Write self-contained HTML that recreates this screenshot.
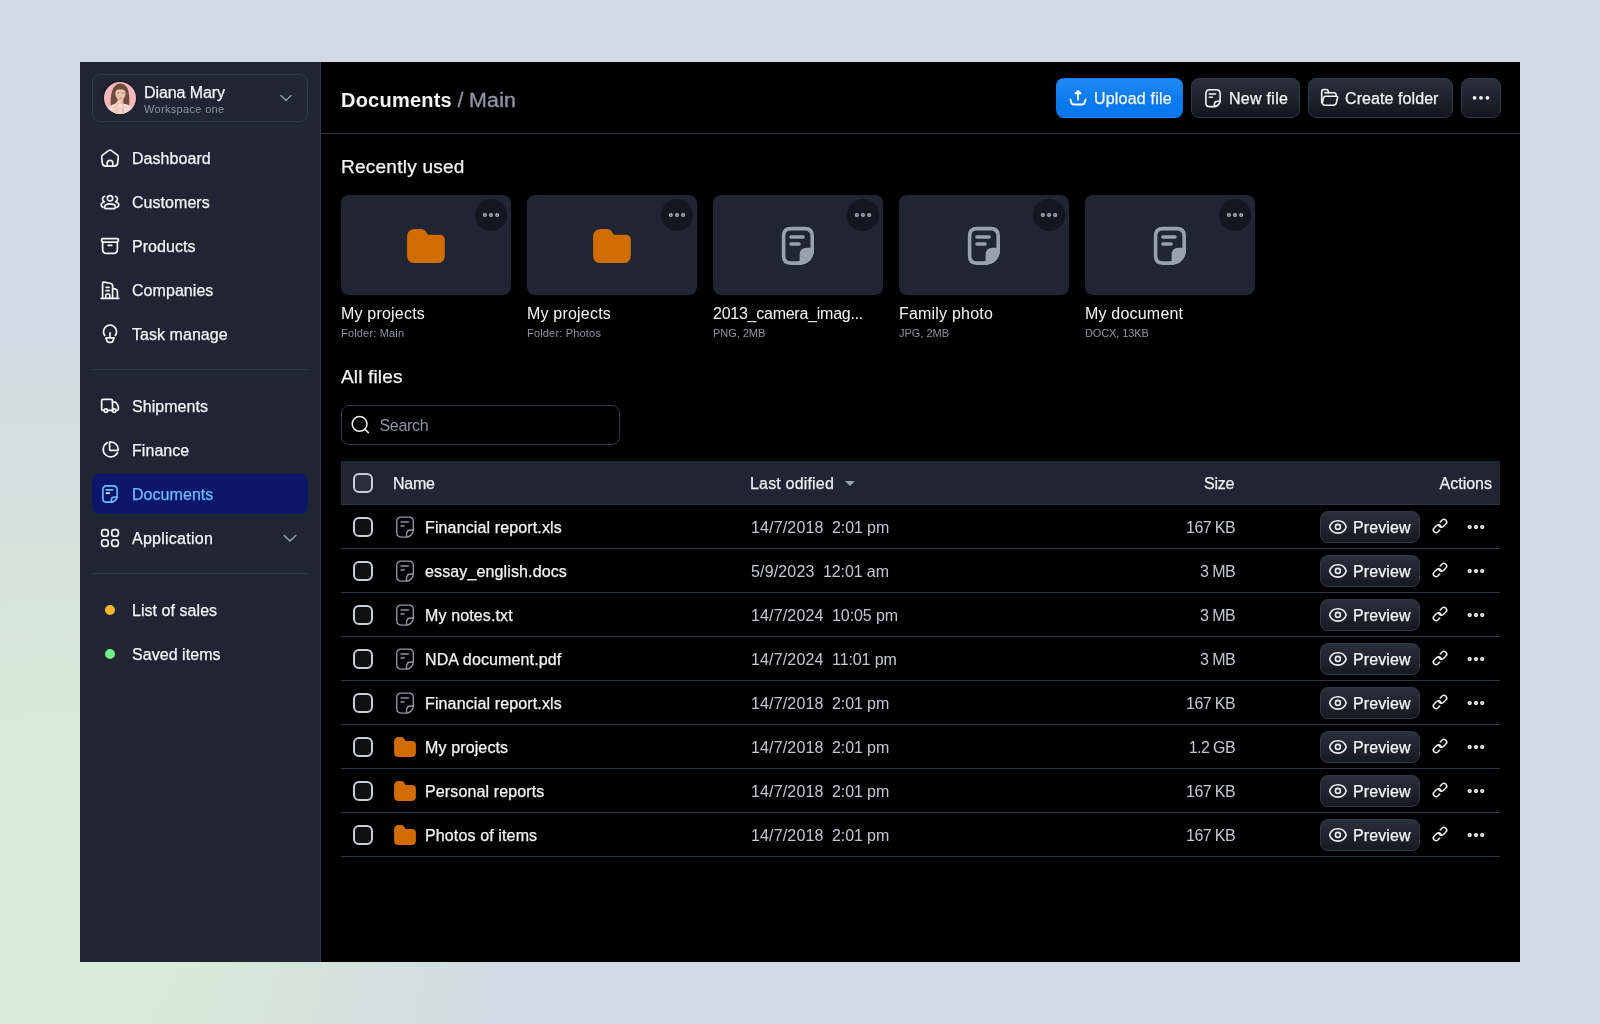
<!DOCTYPE html>
<html><head><meta charset="utf-8">
<style>
*{box-sizing:border-box;margin:0;padding:0}
html,body{width:1600px;height:1024px;overflow:hidden}
body{font-family:"Liberation Sans",sans-serif;color:#f4f5f7;position:relative;background:#d1d9e3;}
#bg{position:absolute;left:0;top:0;width:1600px;height:1024px;background:radial-gradient(ellipse 470px 580px at 50px 890px,#d7ebd7 0%,#d7ebd7 28%,rgba(215,235,215,.55) 60%,rgba(209,217,227,0) 100%);}
.app{position:absolute;left:80px;top:62px;width:1440px;height:900px;background:#000;overflow:hidden;will-change:transform}
.side{position:absolute;left:0;top:0;width:241px;height:900px;background:#1f2532;border-right:1px solid #2d394b}
.user{position:absolute;left:12px;top:12px;width:216px;height:48px;border:1px solid #2d394b;border-radius:8px}
.avatar{position:absolute;left:11px;top:7px;width:32px;height:32px;border-radius:50%;overflow:hidden;box-shadow:0 0 0 1px #161b26}
.uname{position:absolute;left:51px;top:9px;font-size:16px;line-height:18px;letter-spacing:-.1px;color:#f4f5f7;white-space:nowrap}
.uws{position:absolute;left:51px;top:27px;font-size:11px;line-height:14px;letter-spacing:.33px;color:#8a93a2;white-space:nowrap}
.chev{position:absolute;left:187px;top:19px}
.nav{position:absolute;left:12px;width:216px;height:40px;border-radius:8px}
.nav svg{position:absolute;left:8px;top:10px}
.nav span{position:absolute;left:40px;top:12px;font-size:16px;line-height:18px;letter-spacing:.05px;color:#f4f5f7;white-space:nowrap}
.nav.active{background:#0d176a}
.nav.active span{color:#6ebefc}
.divider{position:absolute;left:12px;width:216px;height:1px;background:#2d394b}
.dot{position:absolute;left:13px;top:15px;width:10px;height:10px;border-radius:50%}
.main{position:absolute;left:241px;top:0;width:1199px;height:900px}
.hdr{position:absolute;left:0;top:0;width:1199px;height:72px;border-bottom:1px solid #2d394b}
.title{position:absolute;left:20px;top:27px;font-size:20px;line-height:22px;font-weight:700;letter-spacing:.22px;color:#f4f5f7;white-space:nowrap}
.title i{font-style:normal;font-weight:400;color:#8c96a6;letter-spacing:0;-webkit-text-stroke:.35px #8c96a6}
.btn{position:absolute;top:16px;height:40px;border-radius:8px;background:linear-gradient(#2a2f3a,#12161e);border:1px solid #2d394b;font-size:16px;line-height:18px;letter-spacing:.2px;color:#f4f5f7;white-space:nowrap}
.btn svg{position:absolute;top:10px}
.btn span{position:absolute;top:11px}
.h2{position:absolute;left:20px;font-size:19px;line-height:22px;color:#f4f5f7;white-space:nowrap}
.card{position:absolute;top:133px;width:170px;height:100px;background:#1f2532;border-radius:8px}
.card .more{position:absolute;right:4px;top:4px;width:32px;height:32px;border-radius:50%;background:#13171f}
.card .ic{position:absolute;left:65px;top:30px}
.ct{position:absolute;top:243px;font-size:16px;line-height:18px;letter-spacing:.2px;color:#f4f5f7;white-space:nowrap}
.cs{position:absolute;top:264px;font-size:11px;line-height:14px;letter-spacing:.18px;color:#8a93a2;white-space:nowrap}
.search{position:absolute;left:20px;top:343px;width:279px;height:40px;border:1px solid #2f3a4c;border-radius:8px}
.search svg{position:absolute;left:8px;top:8px}
.search span{position:absolute;left:37.5px;top:11px;font-size:16px;line-height:18px;letter-spacing:-.32px;color:#8a94a4}
.thead{position:absolute;left:20px;top:399px;width:1159px;height:44px;background:#1f2532;border-bottom:1px solid #2d394b}
.row{position:absolute;left:20px;width:1159px;height:44px;border-bottom:1px solid #2d394b}
.cb{position:absolute;left:12px;top:12px;width:20px;height:20px;border:2px solid #c9d0d9;border-radius:6px;background:#101010}
.thead .cb{background:#2a303b}
.cell{position:absolute;top:14px;font-size:16px;line-height:18px;letter-spacing:.13px;white-space:nowrap}
.num{letter-spacing:-.15px}
.fic{position:absolute;left:54px;top:11px}
.pv{position:absolute;left:979px;top:6px;width:100px;height:32px;border-radius:8px;background:linear-gradient(#2a2f3a,#151921);border:1px solid #2d394b}
.pv svg{position:absolute;left:7.2px;top:5px}
.pv span{position:absolute;left:32px;top:7px;font-size:16px;line-height:18px;letter-spacing:.1px;color:#f4f5f7}
.lnk{position:absolute;left:1087px;top:9px;line-height:0}
.rdots{position:absolute;left:1125px;top:17px;line-height:0}
.med{-webkit-text-stroke:.25px currentColor}
.nav span,.btn span,.pv span,.uname,.h2,.thead .cell,.nm{-webkit-text-stroke:.25px currentColor}
</style></head>
<body>
<div id="bg"></div>
<div class="app">
  <div class="side">
    <div class="user">
      <div class="avatar">
        <svg width="32" height="32" viewBox="0 0 32 32"><rect width="32" height="32" fill="#f4b7ba"/><path d="M6.8 24 C6.2 14 7.5 2.4 16.2 1.6 C24.8 2 25.8 12 25.2 23.5 Z" fill="#6f4c3c"/><rect x="13.6" y="15.5" width="5.8" height="7" fill="#deb29d"/><ellipse cx="16.4" cy="11.6" rx="5.1" ry="6.3" fill="#eac4ae"/><path d="M10.8 9.5 C11 5.2 13.5 3.6 16.4 3.6 C19.4 3.6 21.8 5.6 22 9.5 C19.5 6.8 13.8 6.4 10.8 9.5Z" fill="#6f4c3c"/><ellipse cx="14.3" cy="11" rx="1.1" ry=".55" fill="#8a6658"/><ellipse cx="18.7" cy="11" rx="1.1" ry=".55" fill="#8a6658"/><ellipse cx="16.4" cy="16" rx="1.6" ry=".65" fill="#cf8c8a"/><path d="M1.5 32 C2.5 24.5 8 21.6 16.2 21.6 C24.4 21.6 29.5 24.5 30.5 32 Z" fill="#f2d6d1"/><path d="M18.8 21.8 L20.6 32 L17.4 32 Z" fill="#e6bca8"/><path d="M9.8 32 C9.2 25.5 10.8 20.2 14.4 18.8 C16.4 18.2 18.2 18.6 18.2 19.7 C16.6 20.2 15.2 21.2 14.8 23.2 L15.2 32 Z" fill="#efcbb8"/></svg>
      </div>
      <div class="uname">Diana Mary</div>
      <div class="uws">Workspace one</div>
      <svg class="chev" width="12" height="8" viewBox="0 0 12 8"><path d="M1 1.5 L6 6.5 L11 1.5" fill="none" stroke="#8f98a6" stroke-width="1.5" stroke-linecap="round" stroke-linejoin="round"/></svg>
    </div>
    <!-- NAV -->
    <div class="nav" style="top:76px">
      <svg width="20" height="20" viewBox="0 0 20 20" fill="none" stroke="#f4f5f7" stroke-width="1.7" stroke-linecap="round" stroke-linejoin="round"><path d="M8.9 2.4 Q10 1.65 11.1 2.4 L17.5 7.1 Q18.4 7.8 18.3 8.9 L17.7 14.9 Q17.4 18.05 14.3 18.05 L5.7 18.05 Q2.6 18.05 2.3 14.9 L1.7 8.9 Q1.6 7.8 2.5 7.1 Z"/><path d="M7.2 18.05 L7.2 15.1 Q7.2 12.3 10 12.3 Q12.8 12.3 12.8 15.1 L12.8 18.05"/></svg>
      <span>Dashboard</span>
    </div>
    <div class="nav" style="top:120px">
      <svg width="20" height="20" viewBox="0 0 20 20" fill="none" stroke="#f4f5f7" stroke-width="1.7" stroke-linecap="round" stroke-linejoin="round"><circle cx="10" cy="6.3" r="2.7"/><path d="M4.7 14.4 Q5.3 11.9 10 11.9 Q14.7 11.9 15.3 14.4 Q15.8 16.7 13.5 16.7 L6.5 16.7 Q4.2 16.7 4.7 14.4 Z"/><path d="M4.6 4.3 Q2.5 5 2.5 7 Q2.5 9 4.4 9.8 Q1.2 11 1.2 12.7 Q1.2 14.5 3 15.3"/><path d="M15.4 4.3 Q17.5 5 17.5 7 Q17.5 9 15.6 9.8 Q18.8 11 18.8 12.7 Q18.8 14.5 17 15.3"/></svg>
      <span>Customers</span>
    </div>
    <div class="nav" style="top:164px">
      <svg width="20" height="20" viewBox="0 0 20 20" fill="none" stroke="#f4f5f7" stroke-width="1.7" stroke-linecap="round" stroke-linejoin="round"><path d="M2.6 2.65 L17.4 2.65 Q18.35 2.65 18.35 3.6 L18.35 4.3 Q18.35 6.2 16.5 6.2 L3.5 6.2 Q1.65 6.2 1.65 4.3 L1.65 3.6 Q1.65 2.65 2.6 2.65 Z"/><path d="M2.65 6.2 L2.65 13.4 Q2.65 17.35 6.6 17.35 L13.4 17.35 Q17.35 17.35 17.35 13.4 L17.35 6.2"/><path d="M8.2 9.3 L11.8 9.3"/></svg>
      <span>Products</span>
    </div>
    <div class="nav" style="top:208px">
      <svg width="20" height="20" viewBox="0 0 20 20" fill="none" stroke="#f4f5f7" stroke-width="1.7" stroke-linecap="round" stroke-linejoin="round"><path d="M1.2 18.35 L18.8 18.35"/><path d="M2.6 18.35 L2.6 3.4 Q2.6 1.8 4.2 2.1 L10.9 3.5 Q12.6 3.9 12.6 5.6 L12.6 18.35"/><path d="M12.6 8.5 L15.5 9.1 Q17.4 9.5 17.4 11.4 L17.4 18.35"/><path d="M6.1 7.3 L9.1 7.3"/><path d="M6.1 10.7 L9.1 10.7"/><path d="M5.8 18.35 L5.8 15.2 Q5.8 14 7 14 L8.6 14 Q9.8 14 9.8 15.2 L9.8 18.35"/></svg>
      <span>Companies</span>
    </div>
    <div class="nav" style="top:252px">
      <svg width="20" height="20" viewBox="0 0 20 20" fill="none" stroke="#f4f5f7" stroke-width="1.7" stroke-linecap="round" stroke-linejoin="round"><path d="M4.7 11.6 A6.55 6.55 0 1 1 15.3 11.6"/><path d="M10 8.8 L10 12.4"/><path d="M5.9 13.9 L14.1 13.9 L13 16.9 Q12.5 18.3 11 18.3 L9 18.3 Q7.5 18.3 7 16.9 Z"/></svg>
      <span>Task manage</span>
    </div>
    <div class="divider" style="top:307px"></div>
    <div class="nav" style="top:324px">
      <svg width="20" height="20" viewBox="0 0 20 20" fill="none" stroke="#f4f5f7" stroke-width="1.7" stroke-linecap="round" stroke-linejoin="round"><path d="M4.2 14.4 L3.1 14.4 Q1.65 14.4 1.65 12.9 L1.65 4.8 Q1.65 3.3 3.1 3.3 L11 3.3 Q12.5 3.3 12.5 4.8 L12.5 14.4"/><path d="M7.6 14.4 L12.4 14.4"/><path d="M12.5 6.2 L14.7 6.2 Q15.8 6.2 16.4 7.1 L17.8 9.3 Q18.3 10.1 18.3 11 L18.3 13.2 Q18.3 14.4 17 14.4 L15.8 14.4"/><circle cx="5.9" cy="14.6" r="1.75"/><circle cx="14.1" cy="14.6" r="1.75"/></svg>
      <span>Shipments</span>
    </div>
    <div class="nav" style="top:368px">
      <svg width="20" height="20" viewBox="0 0 20 20" fill="none" stroke="#f4f5f7" stroke-width="1.7" stroke-linecap="round" stroke-linejoin="round"><path d="M7.3 2.7 A7.5 7.5 0 1 0 17.5 12.6"/><path d="M9.6 2.6 Q9.6 1.75 10.5 1.8 A7.9 7.9 0 0 1 18.3 9.5 Q18.35 10.4 17.5 10.4 L10.6 10.4 Q9.6 10.4 9.6 9.4 Z"/></svg>
      <span>Finance</span>
    </div>
    <div class="nav active" style="top:412px">
      <svg width="20" height="20" viewBox="0 0 20 20" fill="none" stroke="#6ebefc" stroke-width="1.6" stroke-linecap="round" stroke-linejoin="round"><path d="M17.1 13 L17.1 5.6 Q17.1 1.9 13.4 1.9 L6.6 1.9 Q2.9 1.9 2.9 5.6 L2.9 14.4 Q2.9 18.1 6.6 18.1 L11.4 18.1 Q13.6 18.1 15.4 16.1 Q16.8 14.6 17.1 13 Z"/><path d="M11.4 18.1 L11.4 16 Q11.4 13 14.4 13 L17.1 13"/><path d="M6.3 5.9 L12.6 5.9"/><path d="M6.3 9.1 L9.3 9.1" stroke="#e3ecfd"/></svg>
      <span>Documents</span>
    </div>
    <div class="nav" style="top:456px">
      <svg width="20" height="20" viewBox="0 0 20 20" fill="none" stroke="#f4f5f7" stroke-width="1.7" stroke-linecap="round" stroke-linejoin="round"><rect x="1.65" y="1.65" width="6.6" height="6.6" rx="2.6"/><rect x="11.75" y="1.65" width="6.6" height="6.6" rx="2.6"/><rect x="1.65" y="11.75" width="6.6" height="6.6" rx="2.6"/><rect x="11.75" y="11.75" width="6.6" height="6.6" rx="2.6"/></svg>
      <span style="letter-spacing:.25px">Application</span>
      <svg style="left:191px;top:16px" width="14" height="9" viewBox="0 0 14 9"><path d="M1.2 1.5 L7 7 L12.8 1.5" fill="none" stroke="#9aa2ae" stroke-width="1.5" stroke-linecap="round" stroke-linejoin="round"/></svg>
    </div>
    <div class="divider" style="top:511px"></div>
    <div class="nav" style="top:528px">
      <div class="dot" style="background:#fbb62e"></div>
      <span>List of sales</span>
    </div>
    <div class="nav" style="top:572px">
      <div class="dot" style="background:#6ff28a"></div>
      <span>Saved items</span>
    </div>
  </div>

  <div class="main">
    <div class="hdr">
      <div class="title">Documents <i>/</i><i style="margin-left:6px;letter-spacing:.2px;display:inline-block;transform:scaleX(1.07);transform-origin:0 50%">Main</i></div>
      <div class="btn" style="left:735px;width:127px;background:linear-gradient(#2189f3 0%,#0b7aee 55%,#0577ec 100%);border-color:transparent">
        <svg style="left:11px;top:9px" width="20" height="20" viewBox="0 0 20 20" fill="none" stroke="#fff" stroke-width="1.8" stroke-linecap="round" stroke-linejoin="round"><path d="M10 5.4 L10 11.7"/><path d="M7.4 5.3 L10 2.9 L12.6 5.3 Z" fill="#fff"/><path d="M2.4 11.4 L3.3 14.5 Q3.8 16.5 6 16.5 L14 16.5 Q16.2 16.5 16.7 14.5 L17.6 11.4"/></svg>
        <span style="left:37px;letter-spacing:.2px">Upload file</span>
      </div>
      <div class="btn" style="left:870px;width:109px">
        <svg style="left:11px;top:9px" width="20" height="20" viewBox="0 0 20 20" fill="none" stroke="#f4f5f7" stroke-width="1.6" stroke-linecap="round" stroke-linejoin="round"><path d="M17.1 13.3 L17.1 5.5 Q17.1 1.8 13.4 1.8 L6.6 1.8 Q2.9 1.8 2.9 5.5 L2.9 14.9 Q2.9 18.6 6.6 18.6 L11.4 18.6 Q13.6 18.6 15.4 16.6 Q16.8 15 17.1 13.3 Z"/><path d="M11.4 18.6 L11.4 16.3 Q11.4 13.3 14.4 13.3 L17.1 13.3"/><path d="M6.3 6 L12.6 6"/><path d="M6.3 9.2 L9.3 9.2"/></svg>
        <span style="left:37px;letter-spacing:.28px">New file</span>
      </div>
      <div class="btn" style="left:987px;width:145px">
        <svg style="left:10px;top:8px" width="20" height="20" viewBox="0 0 20 20" fill="none" stroke="#f4f5f7" stroke-width="1.6" stroke-linecap="round" stroke-linejoin="round"><path d="M2.7 15.6 L2.7 5 Q2.7 2.5 5.2 2.5 L7.2 2.5 Q8.5 2.5 9.1 3.7 L9.7 5.8 L15.2 5.8 Q17.1 5.8 17.3 8.6"/><path d="M5.9 5.8 L9.7 5.8"/><path d="M6.2 9.3 L17.1 9.3 Q18.9 9.3 18.5 11 L17.3 15.9 Q16.7 18.2 14.4 18.2 L6.2 18.2 Q3.1 18.2 3.4 15.3 L4.5 11 Q4.9 9.3 6.2 9.3 Z"/></svg>
        <span style="left:36px;letter-spacing:.08px">Create folder</span>
      </div>
      <div class="btn" style="left:1140px;width:40px">
        <svg style="left:0;top:0" width="38" height="38" viewBox="0 0 38 38" fill="#f4f5f7"><circle cx="12.6" cy="18.8" r="1.9"/><circle cx="19" cy="18.8" r="1.9"/><circle cx="25.4" cy="18.8" r="1.9"/></svg>
      </div>
    </div>

    <div class="h2" style="top:94px;letter-spacing:.25px">Recently used</div>
    <div class="card" style="left:20px"><div class="ic"><svg width="40" height="40" viewBox="0 0 40 40"><path fill="#d06c00" d="M1.1 12.2 Q1.1 4 9.3 4 L15.2 4 Q18.3 4 19.9 6.6 L21.8 9.8 L33.4 9.8 Q38.8 9.8 38.8 15.2 L38.8 30.4 Q38.8 38 31.2 38 L8.7 38 Q1.1 38 1.1 30.4 Z"/></svg></div><div class="more"><svg width="32" height="32" viewBox="0 0 32 32" fill="#6f7885" stroke="#a1aab6" stroke-width="1.2"><circle cx="9.85" cy="16" r="1.5"/><circle cx="16" cy="16" r="1.5"/><circle cx="22.15" cy="16" r="1.5"/></svg></div></div>
    <div class="ct" style="left:20px;">My projects</div><div class="cs" style="left:20px;">Folder: Main</div>
    <div class="card" style="left:206px"><div class="ic"><svg width="40" height="40" viewBox="0 0 40 40"><path fill="#d06c00" d="M1.1 12.2 Q1.1 4 9.3 4 L15.2 4 Q18.3 4 19.9 6.6 L21.8 9.8 L33.4 9.8 Q38.8 9.8 38.8 15.2 L38.8 30.4 Q38.8 38 31.2 38 L8.7 38 Q1.1 38 1.1 30.4 Z"/></svg></div><div class="more"><svg width="32" height="32" viewBox="0 0 32 32" fill="#6f7885" stroke="#a1aab6" stroke-width="1.2"><circle cx="9.85" cy="16" r="1.5"/><circle cx="16" cy="16" r="1.5"/><circle cx="22.15" cy="16" r="1.5"/></svg></div></div>
    <div class="ct" style="left:206px;">My projects</div><div class="cs" style="left:206px;">Folder: Photos</div>
    <div class="card" style="left:392px"><div class="ic"><svg width="40" height="40" viewBox="0 0 40 40" fill="none" stroke="#98a2ae" stroke-width="3.6" stroke-linecap="round" stroke-linejoin="round"><path d="M5.6 11 Q5.6 3.6 13 3.6 L26.8 3.6 Q34.2 3.6 34.2 11 L34.2 24.6 Q34.2 30.5 30.6 34.3 Q27 38.1 20.5 38.1 L13 38.1 Q5.6 38.1 5.6 30.7 Z"/><path fill="#98a2ae" d="M34.2 24.6 L28.6 24.6 Q23.4 24.6 23.4 29.8 L23.4 38.1 L20.5 38.1 Q27 38.1 30.6 34.3 Q34.2 30.5 34.2 24.6 Z"/><path d="M13 12 L25 12"/><path d="M13 19 L21 19"/></svg></div><div class="more"><svg width="32" height="32" viewBox="0 0 32 32" fill="#6f7885" stroke="#a1aab6" stroke-width="1.2"><circle cx="9.85" cy="16" r="1.5"/><circle cx="16" cy="16" r="1.5"/><circle cx="22.15" cy="16" r="1.5"/></svg></div></div>
    <div class="ct" style="left:392px;letter-spacing:-.25px">2013_camera_imag...</div><div class="cs" style="left:392px;letter-spacing:-.05px">PNG, 2MB</div>
    <div class="card" style="left:578px"><div class="ic"><svg width="40" height="40" viewBox="0 0 40 40" fill="none" stroke="#98a2ae" stroke-width="3.6" stroke-linecap="round" stroke-linejoin="round"><path d="M5.6 11 Q5.6 3.6 13 3.6 L26.8 3.6 Q34.2 3.6 34.2 11 L34.2 24.6 Q34.2 30.5 30.6 34.3 Q27 38.1 20.5 38.1 L13 38.1 Q5.6 38.1 5.6 30.7 Z"/><path fill="#98a2ae" d="M34.2 24.6 L28.6 24.6 Q23.4 24.6 23.4 29.8 L23.4 38.1 L20.5 38.1 Q27 38.1 30.6 34.3 Q34.2 30.5 34.2 24.6 Z"/><path d="M13 12 L25 12"/><path d="M13 19 L21 19"/></svg></div><div class="more"><svg width="32" height="32" viewBox="0 0 32 32" fill="#6f7885" stroke="#a1aab6" stroke-width="1.2"><circle cx="9.85" cy="16" r="1.5"/><circle cx="16" cy="16" r="1.5"/><circle cx="22.15" cy="16" r="1.5"/></svg></div></div>
    <div class="ct" style="left:578px;">Family photo</div><div class="cs" style="left:578px;letter-spacing:0">JPG, 2MB</div>
    <div class="card" style="left:764px"><div class="ic"><svg width="40" height="40" viewBox="0 0 40 40" fill="none" stroke="#98a2ae" stroke-width="3.6" stroke-linecap="round" stroke-linejoin="round"><path d="M5.6 11 Q5.6 3.6 13 3.6 L26.8 3.6 Q34.2 3.6 34.2 11 L34.2 24.6 Q34.2 30.5 30.6 34.3 Q27 38.1 20.5 38.1 L13 38.1 Q5.6 38.1 5.6 30.7 Z"/><path fill="#98a2ae" d="M34.2 24.6 L28.6 24.6 Q23.4 24.6 23.4 29.8 L23.4 38.1 L20.5 38.1 Q27 38.1 30.6 34.3 Q34.2 30.5 34.2 24.6 Z"/><path d="M13 12 L25 12"/><path d="M13 19 L21 19"/></svg></div><div class="more"><svg width="32" height="32" viewBox="0 0 32 32" fill="#6f7885" stroke="#a1aab6" stroke-width="1.2"><circle cx="9.85" cy="16" r="1.5"/><circle cx="16" cy="16" r="1.5"/><circle cx="22.15" cy="16" r="1.5"/></svg></div></div>
    <div class="ct" style="left:764px;">My document</div><div class="cs" style="left:764px;letter-spacing:-.12px">DOCX, 13KB</div>
    <div class="h2" style="top:304px;letter-spacing:.15px">All files</div>
    <div class="search"><svg width="22" height="22" viewBox="0 0 22 22" fill="none" stroke="#eceef2" stroke-width="1.5" stroke-linecap="round"><circle cx="9.6" cy="9.9" r="7.4"/><path d="M15 15.4 L18.4 18.6"/></svg><span>Search</span></div>
    <div class="thead"><div class="cb"></div><div class="cell" style="left:52px;color:#eef0f3;letter-spacing:-.25px">Name</div><div class="cell" style="left:409px;color:#eef0f3;letter-spacing:.18px">Last odified</div><span style="position:absolute;left:504px;top:20px;line-height:0"><svg width="10" height="6" viewBox="0 0 10 6"><path d="M0 0 L10 0 L5 5 Z" fill="#9aa3af"/></svg></span><div class="cell" style="right:266px;color:#eef0f3;letter-spacing:-.3px">Size</div><div class="cell" style="right:8px;color:#eef0f3;letter-spacing:0">Actions</div></div>
    <div class="row" style="top:443px"><div class="cb"></div><div class="fic" style="left:54px;top:11px"><svg width="20" height="22" viewBox="0 0 20 22" fill="none" stroke="#8e98a6" stroke-width="1.35" stroke-linecap="round" stroke-linejoin="round"><path d="M18.35 14 L18.35 5.6 Q18.35 1.15 13.9 1.15 L6.2 1.15 Q1.75 1.15 1.75 5.6 L1.75 16.6 Q1.75 21.05 6.2 21.05 L11.5 21.05 Q14.2 21.05 16.3 18.7 Q18.35 16.5 18.35 14 Z"/><path d="M11.5 21.05 L11.5 18.6 Q11.5 14 16 14 L18.35 14"/><path d="M6 6 L13.3 6"/><path d="M6 10 L9.2 10"/></svg></div><div class="cell nm" style="left:84px;color:#f4f5f7">Financial report.xls</div><div class="cell" style="left:410px;color:#c3c8d0;letter-spacing:.15px">14/7/2018<span style="margin-left:8.5px;letter-spacing:-.1px">2:01 pm</span></div><div class="cell" style="right:265px;color:#c3c8d0;letter-spacing:-.6px">167 KB</div><div class="pv"><svg width="19.8" height="19.8" viewBox="0 0 24 24" fill="none" stroke="#eef0f3" stroke-width="1.95" stroke-linecap="round" stroke-linejoin="round"><path d="M2.036 12.322a1.012 1.012 0 0 1 0-.639C3.423 7.51 7.36 4.5 12 4.5c4.638 0 8.573 3.007 9.963 7.178.07.207.07.431 0 .639C20.577 16.49 16.64 19.5 12 19.5c-4.638 0-8.573-3.007-9.963-7.178Z"/><path d="M15 12a3 3 0 1 1-6 0 3 3 0 0 1 6 0Z"/></svg><span>Preview</span></div><div class="lnk"><svg width="24" height="24" viewBox="0 0 24 24" fill="none" stroke="#eef0f3" stroke-width="1.5" stroke-linecap="round" stroke-linejoin="round"><g transform="rotate(-45 12 12)"><path d="M9 14.75 L6.5 14.75 A2.75 2.75 0 0 1 6.5 9.25 L10 9.25 A2.75 2.75 0 0 1 12.49 13.16"/><path d="M15 9.25 L17.5 9.25 A2.75 2.75 0 0 1 17.5 14.75 L14 14.75 A2.75 2.75 0 0 1 11.51 10.84"/></g></svg></div><div class="rdots"><svg width="24" height="10" viewBox="0 0 24 10" fill="#9a9ea4" stroke="#f2f3f5" stroke-width="1.3"><circle cx="3.7" cy="5" r="1.45"/><circle cx="10" cy="5" r="1.45"/><circle cx="16.2" cy="5" r="1.45"/></svg></div></div>
    <div class="row" style="top:487px"><div class="cb"></div><div class="fic" style="left:54px;top:11px"><svg width="20" height="22" viewBox="0 0 20 22" fill="none" stroke="#8e98a6" stroke-width="1.35" stroke-linecap="round" stroke-linejoin="round"><path d="M18.35 14 L18.35 5.6 Q18.35 1.15 13.9 1.15 L6.2 1.15 Q1.75 1.15 1.75 5.6 L1.75 16.6 Q1.75 21.05 6.2 21.05 L11.5 21.05 Q14.2 21.05 16.3 18.7 Q18.35 16.5 18.35 14 Z"/><path d="M11.5 21.05 L11.5 18.6 Q11.5 14 16 14 L18.35 14"/><path d="M6 6 L13.3 6"/><path d="M6 10 L9.2 10"/></svg></div><div class="cell nm" style="left:84px;color:#f4f5f7">essay_english.docs</div><div class="cell" style="left:410px;color:#c3c8d0;letter-spacing:.15px">5/9/2023<span style="margin-left:8.5px;letter-spacing:-.1px">12:01 am</span></div><div class="cell" style="right:265px;color:#c3c8d0;letter-spacing:-.6px">3 MB</div><div class="pv"><svg width="19.8" height="19.8" viewBox="0 0 24 24" fill="none" stroke="#eef0f3" stroke-width="1.95" stroke-linecap="round" stroke-linejoin="round"><path d="M2.036 12.322a1.012 1.012 0 0 1 0-.639C3.423 7.51 7.36 4.5 12 4.5c4.638 0 8.573 3.007 9.963 7.178.07.207.07.431 0 .639C20.577 16.49 16.64 19.5 12 19.5c-4.638 0-8.573-3.007-9.963-7.178Z"/><path d="M15 12a3 3 0 1 1-6 0 3 3 0 0 1 6 0Z"/></svg><span>Preview</span></div><div class="lnk"><svg width="24" height="24" viewBox="0 0 24 24" fill="none" stroke="#eef0f3" stroke-width="1.5" stroke-linecap="round" stroke-linejoin="round"><g transform="rotate(-45 12 12)"><path d="M9 14.75 L6.5 14.75 A2.75 2.75 0 0 1 6.5 9.25 L10 9.25 A2.75 2.75 0 0 1 12.49 13.16"/><path d="M15 9.25 L17.5 9.25 A2.75 2.75 0 0 1 17.5 14.75 L14 14.75 A2.75 2.75 0 0 1 11.51 10.84"/></g></svg></div><div class="rdots"><svg width="24" height="10" viewBox="0 0 24 10" fill="#9a9ea4" stroke="#f2f3f5" stroke-width="1.3"><circle cx="3.7" cy="5" r="1.45"/><circle cx="10" cy="5" r="1.45"/><circle cx="16.2" cy="5" r="1.45"/></svg></div></div>
    <div class="row" style="top:531px"><div class="cb"></div><div class="fic" style="left:54px;top:11px"><svg width="20" height="22" viewBox="0 0 20 22" fill="none" stroke="#8e98a6" stroke-width="1.35" stroke-linecap="round" stroke-linejoin="round"><path d="M18.35 14 L18.35 5.6 Q18.35 1.15 13.9 1.15 L6.2 1.15 Q1.75 1.15 1.75 5.6 L1.75 16.6 Q1.75 21.05 6.2 21.05 L11.5 21.05 Q14.2 21.05 16.3 18.7 Q18.35 16.5 18.35 14 Z"/><path d="M11.5 21.05 L11.5 18.6 Q11.5 14 16 14 L18.35 14"/><path d="M6 6 L13.3 6"/><path d="M6 10 L9.2 10"/></svg></div><div class="cell nm" style="left:84px;color:#f4f5f7">My notes.txt</div><div class="cell" style="left:410px;color:#c3c8d0;letter-spacing:.15px">14/7/2024<span style="margin-left:8.5px;letter-spacing:-.1px">10:05 pm</span></div><div class="cell" style="right:265px;color:#c3c8d0;letter-spacing:-.6px">3 MB</div><div class="pv"><svg width="19.8" height="19.8" viewBox="0 0 24 24" fill="none" stroke="#eef0f3" stroke-width="1.95" stroke-linecap="round" stroke-linejoin="round"><path d="M2.036 12.322a1.012 1.012 0 0 1 0-.639C3.423 7.51 7.36 4.5 12 4.5c4.638 0 8.573 3.007 9.963 7.178.07.207.07.431 0 .639C20.577 16.49 16.64 19.5 12 19.5c-4.638 0-8.573-3.007-9.963-7.178Z"/><path d="M15 12a3 3 0 1 1-6 0 3 3 0 0 1 6 0Z"/></svg><span>Preview</span></div><div class="lnk"><svg width="24" height="24" viewBox="0 0 24 24" fill="none" stroke="#eef0f3" stroke-width="1.5" stroke-linecap="round" stroke-linejoin="round"><g transform="rotate(-45 12 12)"><path d="M9 14.75 L6.5 14.75 A2.75 2.75 0 0 1 6.5 9.25 L10 9.25 A2.75 2.75 0 0 1 12.49 13.16"/><path d="M15 9.25 L17.5 9.25 A2.75 2.75 0 0 1 17.5 14.75 L14 14.75 A2.75 2.75 0 0 1 11.51 10.84"/></g></svg></div><div class="rdots"><svg width="24" height="10" viewBox="0 0 24 10" fill="#9a9ea4" stroke="#f2f3f5" stroke-width="1.3"><circle cx="3.7" cy="5" r="1.45"/><circle cx="10" cy="5" r="1.45"/><circle cx="16.2" cy="5" r="1.45"/></svg></div></div>
    <div class="row" style="top:575px"><div class="cb"></div><div class="fic" style="left:54px;top:11px"><svg width="20" height="22" viewBox="0 0 20 22" fill="none" stroke="#8e98a6" stroke-width="1.35" stroke-linecap="round" stroke-linejoin="round"><path d="M18.35 14 L18.35 5.6 Q18.35 1.15 13.9 1.15 L6.2 1.15 Q1.75 1.15 1.75 5.6 L1.75 16.6 Q1.75 21.05 6.2 21.05 L11.5 21.05 Q14.2 21.05 16.3 18.7 Q18.35 16.5 18.35 14 Z"/><path d="M11.5 21.05 L11.5 18.6 Q11.5 14 16 14 L18.35 14"/><path d="M6 6 L13.3 6"/><path d="M6 10 L9.2 10"/></svg></div><div class="cell nm" style="left:84px;color:#f4f5f7">NDA document.pdf</div><div class="cell" style="left:410px;color:#c3c8d0;letter-spacing:.15px">14/7/2024<span style="margin-left:8.5px;letter-spacing:-.1px">11:01 pm</span></div><div class="cell" style="right:265px;color:#c3c8d0;letter-spacing:-.6px">3 MB</div><div class="pv"><svg width="19.8" height="19.8" viewBox="0 0 24 24" fill="none" stroke="#eef0f3" stroke-width="1.95" stroke-linecap="round" stroke-linejoin="round"><path d="M2.036 12.322a1.012 1.012 0 0 1 0-.639C3.423 7.51 7.36 4.5 12 4.5c4.638 0 8.573 3.007 9.963 7.178.07.207.07.431 0 .639C20.577 16.49 16.64 19.5 12 19.5c-4.638 0-8.573-3.007-9.963-7.178Z"/><path d="M15 12a3 3 0 1 1-6 0 3 3 0 0 1 6 0Z"/></svg><span>Preview</span></div><div class="lnk"><svg width="24" height="24" viewBox="0 0 24 24" fill="none" stroke="#eef0f3" stroke-width="1.5" stroke-linecap="round" stroke-linejoin="round"><g transform="rotate(-45 12 12)"><path d="M9 14.75 L6.5 14.75 A2.75 2.75 0 0 1 6.5 9.25 L10 9.25 A2.75 2.75 0 0 1 12.49 13.16"/><path d="M15 9.25 L17.5 9.25 A2.75 2.75 0 0 1 17.5 14.75 L14 14.75 A2.75 2.75 0 0 1 11.51 10.84"/></g></svg></div><div class="rdots"><svg width="24" height="10" viewBox="0 0 24 10" fill="#9a9ea4" stroke="#f2f3f5" stroke-width="1.3"><circle cx="3.7" cy="5" r="1.45"/><circle cx="10" cy="5" r="1.45"/><circle cx="16.2" cy="5" r="1.45"/></svg></div></div>
    <div class="row" style="top:619px"><div class="cb"></div><div class="fic" style="left:54px;top:11px"><svg width="20" height="22" viewBox="0 0 20 22" fill="none" stroke="#8e98a6" stroke-width="1.35" stroke-linecap="round" stroke-linejoin="round"><path d="M18.35 14 L18.35 5.6 Q18.35 1.15 13.9 1.15 L6.2 1.15 Q1.75 1.15 1.75 5.6 L1.75 16.6 Q1.75 21.05 6.2 21.05 L11.5 21.05 Q14.2 21.05 16.3 18.7 Q18.35 16.5 18.35 14 Z"/><path d="M11.5 21.05 L11.5 18.6 Q11.5 14 16 14 L18.35 14"/><path d="M6 6 L13.3 6"/><path d="M6 10 L9.2 10"/></svg></div><div class="cell nm" style="left:84px;color:#f4f5f7">Financial report.xls</div><div class="cell" style="left:410px;color:#c3c8d0;letter-spacing:.15px">14/7/2018<span style="margin-left:8.5px;letter-spacing:-.1px">2:01 pm</span></div><div class="cell" style="right:265px;color:#c3c8d0;letter-spacing:-.6px">167 KB</div><div class="pv"><svg width="19.8" height="19.8" viewBox="0 0 24 24" fill="none" stroke="#eef0f3" stroke-width="1.95" stroke-linecap="round" stroke-linejoin="round"><path d="M2.036 12.322a1.012 1.012 0 0 1 0-.639C3.423 7.51 7.36 4.5 12 4.5c4.638 0 8.573 3.007 9.963 7.178.07.207.07.431 0 .639C20.577 16.49 16.64 19.5 12 19.5c-4.638 0-8.573-3.007-9.963-7.178Z"/><path d="M15 12a3 3 0 1 1-6 0 3 3 0 0 1 6 0Z"/></svg><span>Preview</span></div><div class="lnk"><svg width="24" height="24" viewBox="0 0 24 24" fill="none" stroke="#eef0f3" stroke-width="1.5" stroke-linecap="round" stroke-linejoin="round"><g transform="rotate(-45 12 12)"><path d="M9 14.75 L6.5 14.75 A2.75 2.75 0 0 1 6.5 9.25 L10 9.25 A2.75 2.75 0 0 1 12.49 13.16"/><path d="M15 9.25 L17.5 9.25 A2.75 2.75 0 0 1 17.5 14.75 L14 14.75 A2.75 2.75 0 0 1 11.51 10.84"/></g></svg></div><div class="rdots"><svg width="24" height="10" viewBox="0 0 24 10" fill="#9a9ea4" stroke="#f2f3f5" stroke-width="1.3"><circle cx="3.7" cy="5" r="1.45"/><circle cx="10" cy="5" r="1.45"/><circle cx="16.2" cy="5" r="1.45"/></svg></div></div>
    <div class="row" style="top:663px"><div class="cb"></div><div class="fic" style="left:53px;top:12px"><svg width="22" height="20" viewBox="0 0 22 20"><path fill="#d06c00" d="M0.1 4.6 Q0.1 0.1 4.6 0.1 L7.4 0.1 Q9.4 0.1 10.4 1.9 L11.6 4 L18 4 Q21.9 4 21.9 7.9 L21.9 15.4 Q21.9 19.9 17.4 19.9 L4.6 19.9 Q0.1 19.9 0.1 15.4 Z"/></svg></div><div class="cell nm" style="left:84px;color:#f4f5f7">My projects</div><div class="cell" style="left:410px;color:#c3c8d0;letter-spacing:.15px">14/7/2018<span style="margin-left:8.5px;letter-spacing:-.1px">2:01 pm</span></div><div class="cell" style="right:265px;color:#c3c8d0;letter-spacing:-.6px">1.2 GB</div><div class="pv"><svg width="19.8" height="19.8" viewBox="0 0 24 24" fill="none" stroke="#eef0f3" stroke-width="1.95" stroke-linecap="round" stroke-linejoin="round"><path d="M2.036 12.322a1.012 1.012 0 0 1 0-.639C3.423 7.51 7.36 4.5 12 4.5c4.638 0 8.573 3.007 9.963 7.178.07.207.07.431 0 .639C20.577 16.49 16.64 19.5 12 19.5c-4.638 0-8.573-3.007-9.963-7.178Z"/><path d="M15 12a3 3 0 1 1-6 0 3 3 0 0 1 6 0Z"/></svg><span>Preview</span></div><div class="lnk"><svg width="24" height="24" viewBox="0 0 24 24" fill="none" stroke="#eef0f3" stroke-width="1.5" stroke-linecap="round" stroke-linejoin="round"><g transform="rotate(-45 12 12)"><path d="M9 14.75 L6.5 14.75 A2.75 2.75 0 0 1 6.5 9.25 L10 9.25 A2.75 2.75 0 0 1 12.49 13.16"/><path d="M15 9.25 L17.5 9.25 A2.75 2.75 0 0 1 17.5 14.75 L14 14.75 A2.75 2.75 0 0 1 11.51 10.84"/></g></svg></div><div class="rdots"><svg width="24" height="10" viewBox="0 0 24 10" fill="#9a9ea4" stroke="#f2f3f5" stroke-width="1.3"><circle cx="3.7" cy="5" r="1.45"/><circle cx="10" cy="5" r="1.45"/><circle cx="16.2" cy="5" r="1.45"/></svg></div></div>
    <div class="row" style="top:707px"><div class="cb"></div><div class="fic" style="left:53px;top:12px"><svg width="22" height="20" viewBox="0 0 22 20"><path fill="#d06c00" d="M0.1 4.6 Q0.1 0.1 4.6 0.1 L7.4 0.1 Q9.4 0.1 10.4 1.9 L11.6 4 L18 4 Q21.9 4 21.9 7.9 L21.9 15.4 Q21.9 19.9 17.4 19.9 L4.6 19.9 Q0.1 19.9 0.1 15.4 Z"/></svg></div><div class="cell nm" style="left:84px;color:#f4f5f7">Personal reports</div><div class="cell" style="left:410px;color:#c3c8d0;letter-spacing:.15px">14/7/2018<span style="margin-left:8.5px;letter-spacing:-.1px">2:01 pm</span></div><div class="cell" style="right:265px;color:#c3c8d0;letter-spacing:-.6px">167 KB</div><div class="pv"><svg width="19.8" height="19.8" viewBox="0 0 24 24" fill="none" stroke="#eef0f3" stroke-width="1.95" stroke-linecap="round" stroke-linejoin="round"><path d="M2.036 12.322a1.012 1.012 0 0 1 0-.639C3.423 7.51 7.36 4.5 12 4.5c4.638 0 8.573 3.007 9.963 7.178.07.207.07.431 0 .639C20.577 16.49 16.64 19.5 12 19.5c-4.638 0-8.573-3.007-9.963-7.178Z"/><path d="M15 12a3 3 0 1 1-6 0 3 3 0 0 1 6 0Z"/></svg><span>Preview</span></div><div class="lnk"><svg width="24" height="24" viewBox="0 0 24 24" fill="none" stroke="#eef0f3" stroke-width="1.5" stroke-linecap="round" stroke-linejoin="round"><g transform="rotate(-45 12 12)"><path d="M9 14.75 L6.5 14.75 A2.75 2.75 0 0 1 6.5 9.25 L10 9.25 A2.75 2.75 0 0 1 12.49 13.16"/><path d="M15 9.25 L17.5 9.25 A2.75 2.75 0 0 1 17.5 14.75 L14 14.75 A2.75 2.75 0 0 1 11.51 10.84"/></g></svg></div><div class="rdots"><svg width="24" height="10" viewBox="0 0 24 10" fill="#9a9ea4" stroke="#f2f3f5" stroke-width="1.3"><circle cx="3.7" cy="5" r="1.45"/><circle cx="10" cy="5" r="1.45"/><circle cx="16.2" cy="5" r="1.45"/></svg></div></div>
    <div class="row" style="top:751px"><div class="cb"></div><div class="fic" style="left:53px;top:12px"><svg width="22" height="20" viewBox="0 0 22 20"><path fill="#d06c00" d="M0.1 4.6 Q0.1 0.1 4.6 0.1 L7.4 0.1 Q9.4 0.1 10.4 1.9 L11.6 4 L18 4 Q21.9 4 21.9 7.9 L21.9 15.4 Q21.9 19.9 17.4 19.9 L4.6 19.9 Q0.1 19.9 0.1 15.4 Z"/></svg></div><div class="cell nm" style="left:84px;color:#f4f5f7">Photos of items</div><div class="cell" style="left:410px;color:#c3c8d0;letter-spacing:.15px">14/7/2018<span style="margin-left:8.5px;letter-spacing:-.1px">2:01 pm</span></div><div class="cell" style="right:265px;color:#c3c8d0;letter-spacing:-.6px">167 KB</div><div class="pv"><svg width="19.8" height="19.8" viewBox="0 0 24 24" fill="none" stroke="#eef0f3" stroke-width="1.95" stroke-linecap="round" stroke-linejoin="round"><path d="M2.036 12.322a1.012 1.012 0 0 1 0-.639C3.423 7.51 7.36 4.5 12 4.5c4.638 0 8.573 3.007 9.963 7.178.07.207.07.431 0 .639C20.577 16.49 16.64 19.5 12 19.5c-4.638 0-8.573-3.007-9.963-7.178Z"/><path d="M15 12a3 3 0 1 1-6 0 3 3 0 0 1 6 0Z"/></svg><span>Preview</span></div><div class="lnk"><svg width="24" height="24" viewBox="0 0 24 24" fill="none" stroke="#eef0f3" stroke-width="1.5" stroke-linecap="round" stroke-linejoin="round"><g transform="rotate(-45 12 12)"><path d="M9 14.75 L6.5 14.75 A2.75 2.75 0 0 1 6.5 9.25 L10 9.25 A2.75 2.75 0 0 1 12.49 13.16"/><path d="M15 9.25 L17.5 9.25 A2.75 2.75 0 0 1 17.5 14.75 L14 14.75 A2.75 2.75 0 0 1 11.51 10.84"/></g></svg></div><div class="rdots"><svg width="24" height="10" viewBox="0 0 24 10" fill="#9a9ea4" stroke="#f2f3f5" stroke-width="1.3"><circle cx="3.7" cy="5" r="1.45"/><circle cx="10" cy="5" r="1.45"/><circle cx="16.2" cy="5" r="1.45"/></svg></div></div>
  </div>
</div>
</body></html>
